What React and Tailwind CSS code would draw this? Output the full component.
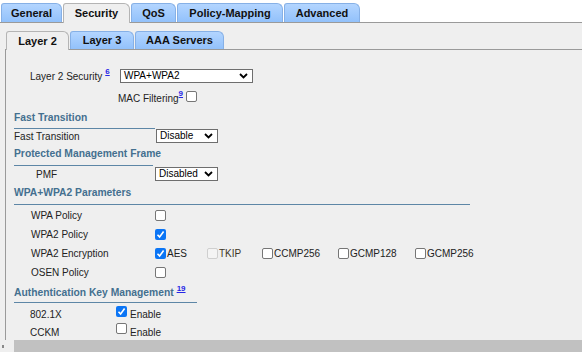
import React from "react";

function Cb({ checked, disabled }) {
  if (checked) {
    return (
      <span className="inline-flex w-[11px] h-[11px] rounded-[2px] bg-[#0b75f5] items-center justify-center shrink-0">
        <svg width="9" height="9" viewBox="0 0 9 9">
          <polyline points="1.5,4.8 3.6,7 7.6,1.6" fill="none" stroke="white" strokeWidth="1.6" />
        </svg>
      </span>
    );
  }
  if (disabled) {
    return <span className="inline-block w-[11px] h-[11px] rounded-[2px] border border-[#cfcfcf] bg-[#f4f4f4] shrink-0" />;
  }
  return <span className="inline-block w-[11px] h-[11px] rounded-[2px] border border-[#767676] bg-white shrink-0" />;
}

function Sel({ value, className }) {
  return (
    <div className={`flex items-center justify-between h-[14px] border border-[#6e6e6e] bg-white pl-[3px] pr-[4px] text-[10px] text-black leading-none ${className}`}>
      <span>{value}</span>
      <svg width="9" height="6" viewBox="0 0 9 6">
        <polyline points="1,1 4.5,4.5 8,1" fill="none" stroke="black" strokeWidth="1.8" />
      </svg>
    </div>
  );
}

function Sup({ children }) {
  return <sup className="text-[8px] font-bold underline text-[#2626e6] ml-[3px]">{children}</sup>;
}

function Header({ children, w, pb }) {
  return (
    <div className={`ml-[8px] border-b border-[#5d86a6] ${w} ${pb}`}>
      <div className="h-[14px] flex items-center whitespace-nowrap font-bold text-[10.3px] text-[#44708f]">{children}</div>
    </div>
  );
}

function TopTab({ label, w, active }) {
  if (active) {
    return (
      <div className={`${w} h-[20px] mb-[-1px] ml-[1px] rounded-tl-[3px] rounded-tr-[6px] border border-b-0 border-[#b4b4b4] bg-[#efefef] flex items-center justify-center font-bold text-[11px] text-[#111]`}>
        {label}
      </div>
    );
  }
  return (
    <div className={`${w} h-[19px] ml-[1px] rounded-tl-[3px] rounded-tr-[6px] border border-b-0 border-[#86b0e6] bg-gradient-to-b from-[#b3d5ff] to-[#92c1fb] flex items-center justify-center font-bold text-[11px] text-[#111]`}>
      {label}
    </div>
  );
}

export default function App() {
  return (
    <div className="w-[582px] h-[352px] overflow-hidden bg-white flex flex-col font-['Liberation_Sans',Arial,sans-serif] text-[#222]">
      {/* top tabs */}
      <div className="h-[23px] shrink-0 flex items-end border-b border-[#9a9a9a]">
        <TopTab label="General" w="w-[61px]" />
        <TopTab label="Security" w="w-[67px]" active />
        <TopTab label="QoS" w="w-[45px]" />
        <TopTab label="Policy-Mapping" w="w-[106px]" />
        <TopTab label="Advanced" w="w-[76px]" />
      </div>

      <div className="flex-1 bg-[#efefef] flex flex-col min-h-0">
        <div className="ml-[5px] flex-1 flex flex-col min-h-0">
          {/* sub tabs */}
          <div className="h-[27px] shrink-0 flex items-end border-b border-[#9a9a9a]">
            <div className="w-[63px] h-[19px] mb-[-1px] ml-[1px] rounded-tl-[3px] rounded-tr-[6px] border border-b-0 border-[#b4b4b4] bg-[#efefef] flex items-center justify-center font-bold text-[11px] text-[#111]">
              Layer 2
            </div>
            <div className="w-[64px] h-[18px] ml-[1px] rounded-tl-[3px] rounded-tr-[6px] border border-b-0 border-[#86b0e6] bg-gradient-to-b from-[#b3d5ff] to-[#92c1fb] flex items-center justify-center font-bold text-[11px] text-[#111]">
              Layer 3
            </div>
            <div className="w-[89px] h-[18px] ml-[1px] rounded-tl-[3px] rounded-tr-[6px] border border-b-0 border-[#86b0e6] bg-gradient-to-b from-[#b3d5ff] to-[#92c1fb] flex items-center justify-center font-bold text-[11px] text-[#111]">
              AAA Servers
            </div>
          </div>

          {/* content */}
          <div className="flex-1 min-h-0 overflow-hidden border-l border-[#9a9a9a] flex flex-col text-[10px]">
            <div className="h-[19px] shrink-0" />
            <div className="h-[14px] shrink-0 flex items-center">
              <div className="ml-[24px] w-[90px] flex items-center">
                <span>Layer 2 Security</span>
                <Sup>6</Sup>
              </div>
              <Sel value="WPA+WPA2" className="w-[133px]" />
            </div>
            <div className="h-[14px] mt-[8px] shrink-0 flex items-center">
              <div className="ml-[112px] flex items-center">
                <span>MAC Filtering</span>
                <sup className="text-[8px] font-bold underline text-[#2626e6]">9</sup>
                <span className="ml-[3px]"><Cb /></span>
              </div>
            </div>

            <div className="mt-[6px]">
              <Header w="w-[141px]" pb="pb-[3px]">Fast Transition</Header>
            </div>
            <div className="h-[14px] shrink-0 flex items-center">
              <div className="ml-[8px] w-[142px]">Fast Transition</div>
              <Sel value="Disable" className="w-[62px]" />
            </div>

            <div className="mt-[4px]">
              <Header w="w-[139px]" pb="pb-[4px]">Protected Management Frame</Header>
            </div>
            <div className="h-[14px] mt-[1px] shrink-0 flex items-center">
              <div className="ml-[30px] w-[119px]">PMF</div>
              <Sel value="Disabled" className="w-[63px]" />
            </div>

            <div className="mt-[5px]">
              <Header w="w-[456px]" pb="pb-[4px]">WPA+WPA2 Parameters</Header>
            </div>
            <div className="h-[19px] mt-[1px] shrink-0 flex items-center">
              <div className="ml-[25px] w-[124px]">WPA Policy</div>
              <Cb />
            </div>
            <div className="h-[19px] shrink-0 flex items-center">
              <div className="ml-[25px] w-[124px]">WPA2 Policy</div>
              <Cb checked />
            </div>
            <div className="h-[19px] shrink-0 flex items-center">
              <div className="ml-[25px] w-[124px]">WPA2 Encryption</div>
              <div className="w-[52px] flex items-center">
                <Cb checked />
                <span className="ml-[1px]">AES</span>
              </div>
              <div className="w-[55px] flex items-center">
                <Cb disabled />
                <span className="ml-[1px] text-[#3d3526]">TKIP</span>
              </div>
              <div className="w-[76px] flex items-center">
                <Cb />
                <span className="ml-[1px]">CCMP256</span>
              </div>
              <div className="w-[77px] flex items-center">
                <Cb />
                <span className="ml-[1px]">GCMP128</span>
              </div>
              <div className="flex items-center">
                <Cb />
                <span className="ml-[1px]">GCMP256</span>
              </div>
            </div>
            <div className="h-[19px] shrink-0 flex items-center">
              <div className="ml-[25px] w-[124px]">OSEN Policy</div>
              <Cb />
            </div>

            <div className="mt-[4px]">
              <Header w="w-[183px]" pb="pb-[2px]">
                <span>Authentication Key Management</span>
                <Sup>19</Sup>
              </Header>
            </div>
            <div className="h-[18px] mt-[2px] shrink-0 flex items-center">
              <div className="ml-[24px] w-[86px]">802.1X</div>
              <div className="mb-[3px]"><Cb checked /></div>
              <span className="ml-[3px]">Enable</span>
            </div>
            <div className="h-[18px] shrink-0 flex items-center">
              <div className="ml-[24px] w-[86px]">CCKM</div>
              <div className="mb-[3px]"><Cb /></div>
              <span className="ml-[3px]">Enable</span>
            </div>
            <div className="h-[18px] shrink-0 flex items-center">
              <div className="ml-[110px]"><Cb /></div>
            </div>
          </div>
        </div>

        {/* bottom scrollbar */}
        <div className="h-[12px] shrink-0 flex items-center">
          <div className="w-[14px] h-full flex items-center pl-[2px]">
            <div className="w-[2px] h-[3px] bg-[#8a8a8a]" />
          </div>
          <div className="flex-1 h-full bg-[#c1c1c1]" />
        </div>
      </div>
    </div>
  );
}
